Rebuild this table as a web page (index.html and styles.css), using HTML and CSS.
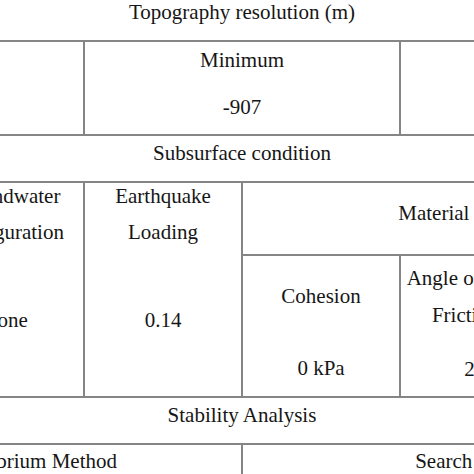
FILE: index.html
```html
<!DOCTYPE html>
<html>
<head>
<meta charset="utf-8">
<link rel="stylesheet" href="styles.css">
</head>
<body>
<div class="viewport">
  <div class="table">
    <div class="cell span-all full"><div class="ln">Topography resolution (m)</div></div>

    <div class="cell span-2 pair"><div class="ln">Maximum</div><div class="ln">1,412</div></div>
    <div class="cell span-2 pair"><div class="ln">Minimum</div><div class="ln">-907</div></div>
    <div class="cell span-2 pair"><div class="ln">Average</div><div class="ln">215</div></div>

    <div class="cell span-all full"><div class="ln">Subsurface condition</div></div>

    <div class="cell tall stack"><div class="ln">Soil</div><div class="ln">Layers</div><div class="ln">1</div></div>
    <div class="cell tall stack"><div class="ln">Groundwater</div><div class="ln">Configuration</div><div class="ln">None</div></div>
    <div class="cell tall stack"><div class="ln">Earthquake</div><div class="ln">Loading</div><div class="ln">0.14</div></div>
    <div class="cell span-3 material"><div class="ln">Material Properties</div></div>
    <div class="cell cohesion"><div class="ln">Cohesion</div><div class="ln">0 kPa</div></div>
    <div class="cell angle"><div class="ln">Angle of Internal</div><div class="ln">Friction (°)</div><div class="ln">25°</div></div>
    <div class="cell angle"><div class="ln">Unit Weight</div><div class="ln">(kN/m³)</div><div class="ln">18</div></div>

    <div class="cell span-all full"><div class="ln">Stability Analysis</div></div>

    <div class="cell span-3 bottom"><div class="ln">Limit Equilibrium Method</div></div>
    <div class="cell span-3 bottom"><div class="ln">Search Method</div></div>
  </div>
</div>
</body>
</html>
```
FILE: styles.css
```css
html, body {
  margin: 0;
  padding: 0;
  background: #ffffff;
  overflow: hidden;
}

.viewport {
  width: 474px;
  height: 474px;
  overflow: hidden;
  background: #ffffff;
}

.table {
  display: grid;
  grid-template-columns: repeat(6, 156px);
  grid-template-rows: 45px 92px 45px 71px 140px 45px 60px;
  gap: 2px;
  padding: 2px;
  width: max-content;
  margin-left: -233px;
  margin-top: -7px;
  background: #858585;
  font-family: "Liberation Serif", "Times New Roman", serif;
  font-size: 21px;
  color: #161616;
}

.cell {
  background: #ffffff;
  text-align: center;
  white-space: nowrap;
}

.ln {
  display: block;
  line-height: 24px;
}

.span-all { grid-column: 1 / -1; }
.span-2 { grid-column: span 2; }
.span-3 { grid-column: span 3; }
.tall { grid-row: span 2; }

.full .ln:first-child { margin-top: 5px; }

.pair .ln:nth-child(1) { margin-top: 6px; }
.pair .ln:nth-child(2) { margin-top: 23px; }

.stack .ln:nth-child(1) { margin-top: 1px; }
.stack .ln:nth-child(2) { margin-top: 12px; }
.stack .ln:nth-child(3) { margin-top: 64px; }

.material .ln { margin-top: 18px; }

.cohesion .ln:nth-child(1) { margin-top: 28px; }
.cohesion .ln:nth-child(2) { margin-top: 48px; }

.angle .ln:nth-child(1) { margin-top: 10px; }
.angle .ln:nth-child(2) { margin-top: 13px; }
.angle .ln:nth-child(3) { margin-top: 30px; }

.bottom .ln { margin-top: 4px; }
```
